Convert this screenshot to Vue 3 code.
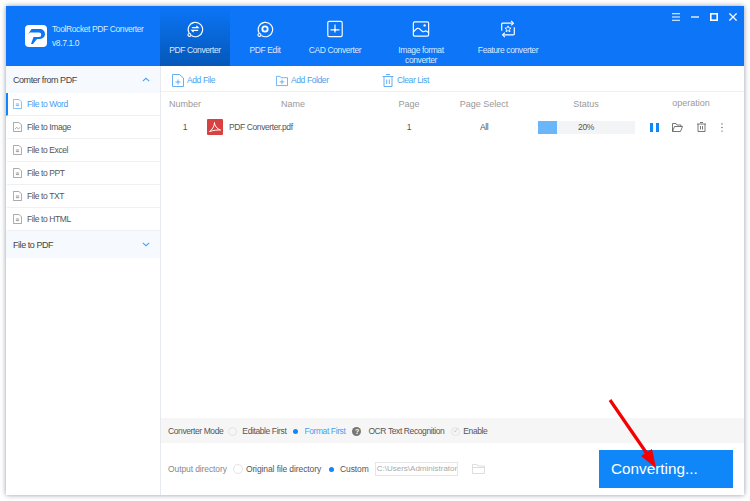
<script setup>
const tabs = [
  { label: 'PDF Converter', w: 70, active: true, icon: 'convert' },
  { label: 'PDF Edit', w: 70, icon: 'edit' },
  { label: 'CAD Converter', w: 70, icon: 'cad' },
  { label: 'Image format converter', w: 102, icon: 'image' },
  { label: 'Feature converter', w: 72, icon: 'feature' },
]
const items = [
  { label: 'File to Word', mark: 'w', active: true },
  { label: 'File to Image', mark: 'img' },
  { label: 'File to Excel', mark: 'e' },
  { label: 'File to PPT', mark: 'p' },
  { label: 'File to TXT', mark: 't' },
  { label: 'File to HTML', mark: 'h' },
]
const heads = ['Number', 'Name', 'Page', 'Page Select', 'Status']
</script>

<template>
  <div class="page">
    <div class="window">
      <header class="header">
        <div class="brand">
          <svg class="logo" viewBox="0 0 22 22">
            <rect width="22" height="22" rx="4" fill="#fff" />
            <path d="M6.500 4h8.500a5 5 0 0 1 0 10h-3l-4 5H6l2.500-7H14a2 2 0 0 0 0-4.500H5L3 9.500z" fill="#0c75f8" />
          </svg>
          <div class="brand-text">
            <div>ToolRocket PDF Converter</div>
            <div>v8.7.1.0</div>
          </div>
        </div>
        <nav class="tabs">
          <div v-for="t in tabs" :key="t.label" class="tab" :class="{ active: t.active }" :style="{ width: t.w + 'px' }">
            <svg class="tab-icon" viewBox="0 0 20 20" fill="none" stroke="#fff" stroke-width="1.300">
              <template v-if="t.icon === 'convert'">
                <path d="M3.500 14.500A8 8 0 1 1 6 17.200" />
                <circle cx="3.800" cy="16.600" r="1.600" />
                <path d="M6.500 8.500h7l-2-2M13.500 11.500h-7l2 2" />
              </template>
              <template v-else-if="t.icon === 'edit'">
                <path d="M3.500 14.500A8 8 0 1 1 6 17.200" />
                <circle cx="3.800" cy="16.600" r="1.600" />
                <circle cx="10" cy="10" r="3" stroke-width="2" />
              </template>
              <template v-else-if="t.icon === 'cad'">
                <rect x="2" y="1.500" width="16" height="17" rx="1.500" />
                <path d="M10 5v9M5 11h10" />
                <circle cx="10" cy="11" r="1.200" fill="#fff" stroke="none" />
              </template>
              <template v-else-if="t.icon === 'image'">
                <rect x="1.500" y="2" width="17" height="16" rx="1.500" />
                <circle cx="14" cy="6" r="1.300" fill="#fff" stroke="none" />
                <path d="M2 13c3-4 5-5 7-2.500s4 3.500 6 1.500l3 1.500" />
              </template>
              <template v-else>
                <path d="M17 8v7.500a1 1 0 0 1-1 1H5M3 12V4.500a1 1 0 0 1 1-1h11" />
                <path d="M13.500 1l2.500 2.500-2.500 2.500M6.500 14l-2.500 2.500 2.500 2.500" />
                <path d="M10 6.500l1 2.300 2.400.2-1.800 1.600.6 2.400-2.200-1.300-2.200 1.300.6-2.400L6.600 9l2.400-.2z" stroke-width="1" />
              </template>
            </svg>
            <span class="tab-label">{{ t.label }}</span>
          </div>
        </nav>
        <div class="controls">
          <svg class="menu" viewBox="0 0 10 10" stroke="#fff" fill="none" stroke-width="1.400"><path d="M0 1h10M0 5h10M0 9h10" /></svg>
          <svg viewBox="0 0 10 10" stroke="#fff" fill="none" stroke-width="1.600"><path d="M0 5h10" /></svg>
          <svg viewBox="0 0 10 10" stroke="#fff" fill="none" stroke-width="2"><rect x="1" y="1" width="8" height="8" /></svg>
          <svg viewBox="0 0 10 10" stroke="#fff" fill="none" stroke-width="1.600"><path d="M.5.500l9 9M9.500.500l-9 9" /></svg>
        </div>
      </header>

      <div class="main">
        <aside class="side">
          <div class="group">
            <span>Comter from PDF</span>
            <svg class="chev" viewBox="0 0 10 6"><path d="M1 5l4-3.500L9 5" /></svg>
          </div>
          <div v-for="i in items" :key="i.label" class="item" :class="{ active: i.active }">
            <svg class="file" viewBox="0 0 10 11" fill="none">
              <path d="M.5.500h6l3 2.500v7.500H.5z" />
              <path v-if="i.mark === 'img'" d="M2 8l2-2 2 1.500L8 6" stroke-width=".7" />
              <path v-else d="M3.200 5.500h3.600M3.200 7.300h3.600" stroke-width=".8" />
            </svg>
            <span>{{ i.label }}</span>
          </div>
          <div class="group last">
            <span>File to PDF</span>
            <svg class="chev" viewBox="0 0 10 6"><path d="M1 1l4 3.500L9 1" /></svg>
          </div>
        </aside>

        <section class="content">
          <div class="toolbar">
            <div class="tool add-file">
              <svg viewBox="0 0 12 13" fill="none"><path d="M.5.500h7l4 3.500v8.500H.5z" /><path d="M3.500 8h5M6 5.500v5" /></svg>
              <span>Add File</span>
            </div>
            <div class="tool add-folder">
              <svg viewBox="0 0 13 12" fill="none"><path d="M.5 1.500h4l1 1.500h7v8.500H.5z" /><path d="M4 7.500h5M6.500 5v5" /></svg>
              <span>Add Folder</span>
            </div>
            <div class="tool">
              <svg viewBox="0 0 11 13" fill="none"><path d="M1.500 3v9.500h8V3M0 2.500h11M3.500.500h4M4.200 5.500v4.500M6.800 5.500v4.500" /></svg>
              <span>Clear List</span>
            </div>
          </div>

          <div class="table-row head">
            <div v-for="h in heads" :key="h">{{ h }}</div>
            <div class="op-head">operation</div>
          </div>

          <div class="table-row body">
            <div>1</div>
            <div class="name">
              <svg class="pdf" viewBox="0 0 16 16">
                <rect width="16" height="16" rx="1" fill="#d94040" />
                <path d="M2.500 12.500C5 11 7.500 7 7.500 3.500c0 3 2.500 6.500 6 7.500-3-.2-7 .2-11 1.500z" fill="none" stroke="#fff" stroke-width="1" />
              </svg>
              <span>PDF Converter.pdf</span>
            </div>
            <div>1</div>
            <div>All</div>
            <div class="progress-cell">
              <div class="progress">
                <div class="fill" :style="{ width: '20%' }"></div>
                <span>20%</span>
              </div>
            </div>
            <div class="ops">
              <svg class="pause" viewBox="0 0 9 9"><rect width="3" height="9" fill="#0f87f8" /><rect x="6" width="3" height="9" fill="#0f87f8" /></svg>
              <svg class="folder" viewBox="0 0 11 9" fill="none"><path d="M.5 8.500V.5h3.500l1 1.500h4v1.500M.5 8.500h8l2-5H2.500z" /></svg>
              <svg class="trash" viewBox="0 0 9 10" fill="none"><path d="M1 2v7.500h7V2M0 2h9M3 .5h3M3.500 4v3.500M5.500 4v3.500" /></svg>
              <svg class="dots" viewBox="0 0 2 10"><circle cx="1" cy="1" r=".8" /><circle cx="1" cy="5" r=".8" /><circle cx="1" cy="9" r=".8" /></svg>
            </div>
          </div>

          <div class="spacer"></div>

          <div class="mode">
            <span>Converter Mode</span>
            <i class="radio off"></i>
            <span>Editable First</span>
            <i class="dot"></i>
            <span class="blue">Format First</span>
            <i class="help">?</i>
            <span>OCR Text Recognition</span>
            <i class="radio off check">✓</i>
            <span>Enable</span>
          </div>

          <div class="output">
            <span class="muted">Output directory</span>
            <i class="radio off big"></i>
            <span>Original file directory</span>
            <i class="dot wide"></i>
            <span>Custom</span>
            <div class="path">C:\Users\Administrator</div>
            <svg class="browse" viewBox="0 0 13 10" fill="none"><path d="M.5.500h4.500l1 1.500h6.500v7.500H.5zM.5 3.500h12" /></svg>
            <button class="convert" type="button">Converting...</button>
          </div>
        </section>
      </div>

      <svg class="arrow" viewBox="0 0 60 80">
        <path d="M2 2L44 63" stroke="#f40000" stroke-width="3.200" fill="none" />
        <path d="M48 70L33 58l11-7z" fill="#f40000" />
      </svg>
    </div>
  </div>
</template>

<style scoped>
.page {
  width: 750px;
  height: 501px;
  padding: 6px;
  box-sizing: border-box;
  background: #fff;
  font-family: "Liberation Sans", Arial, sans-serif;
  font-size: 8.500px;
  letter-spacing: -.4px;
  color: #555;
  overflow: hidden;
}
.window {
  position: relative;
  width: 738px;
  height: 489px;
  display: flex;
  flex-direction: column;
  background: #fff;
  box-shadow: 0 0 5px rgba(60, 70, 90, .55);
}
.header {
  height: 60px;
  flex: none;
  display: flex;
  background: #0c75f8;
  color: #dbeaff;
  position: relative;
}
.brand {
  width: 154px;
  flex: none;
  display: flex;
  align-items: center;
  padding-left: 19px;
  gap: 5px;
  box-sizing: border-box;
}
.logo { width: 22px; height: 22px; flex: none; }
.brand-text { line-height: 14px; white-space: nowrap; }
.tabs { display: flex; }
.tab {
  display: flex;
  flex-direction: column;
  align-items: center;
  padding-top: 14px;
  box-sizing: border-box;
}
.tab.active { background: linear-gradient(#0c75f8, #0458b8); }
.tab-icon { width: 18px; height: 18px; flex: none; }
.tab-label {
  width: 70px;
  margin-top: 7px;
  text-align: center;
  line-height: 10px;
  white-space: normal;
}
.tab:nth-child(1) .tab-label, .tab:nth-child(3) .tab-label, .tab:nth-child(5) .tab-label { white-space: nowrap; width: auto; }
.controls {
  position: absolute;
  top: 7px;
  right: 7px;
  display: flex;
  gap: 11px;
}
.controls svg { width: 8px; height: 8px; display: block; }
.controls .menu { width: 10px; margin-right: -1px; }

.main { flex: 1; display: flex; min-height: 0; }
.side {
  width: 155px;
  flex: none;
  box-sizing: border-box;
  border-right: 1px solid #e6e9ee;
}
.group {
  height: 27px;
  padding: 0 10px 0 7px;
  box-sizing: border-box;
  display: flex;
  align-items: center;
  justify-content: space-between;
  background: #f6fafe;
  color: #444;
  font-size: 9px;
  letter-spacing: -.45px;
}
.group span { position: relative; top: .5px; }
.chev { width: 8px; height: 5px; fill: none; stroke: #4aa3f5; stroke-width: 1.400; }
.item {
  height: 23px;
  box-sizing: border-box;
  padding-left: 5px;
  display: flex;
  align-items: center;
  gap: 5px;
  border-bottom: 1px solid #eef0f3;
  border-left: 2px solid transparent;
}
.item.active { border-left-color: #0f87f8; color: #3f9bf5; }
.file { width: 9px; height: 10px; stroke: #777; stroke-width: .7; flex: none; }
.item.active .file { stroke: #3f9bf5; }

.content { flex: 1; min-width: 0; display: flex; flex-direction: column; }
.toolbar {
  height: 26px;
  flex: none;
  box-sizing: border-box;
  padding: 3px 0 0 11px;
  display: flex;
  align-items: center;
  border-bottom: 1px solid #eef0f3;
  color: #4a9ff0;
}
.tool { display: flex; align-items: center; gap: 3px; }
.tool svg { width: 12px; height: 13px; stroke: #3f9bf5; stroke-width: .8; flex: none; }
.add-file { width: 104px; }
.add-folder { width: 106px; }

.table-row {
  display: grid;
  grid-template-columns: 46px 170px 62px 88px 116px 1fr;
  align-items: center;
  text-align: center;
  margin-left: 1px;
}
.head { height: 24px; color: #999; font-size: 9px; letter-spacing: 0; flex: none; }
.op-head { margin-top: -2px; padding-right: 6px; }
.body { height: 22px; flex: none; }
.name { display: flex; align-items: center; gap: 6px; text-align: left; margin-left: -1px; }
.pdf { width: 16px; height: 16px; flex: none; }
.progress-cell { display: flex; justify-content: center; }
.progress {
  position: relative;
  width: 97px;
  height: 13px;
  background: #f3f4f5;
  line-height: 13px;
  text-align: center;
}
.fill { position: absolute; left: 0; top: 0; bottom: 0; background: #69b6fb; }
.progress span { position: relative; }
.ops { position: relative; display: flex; align-items: center; padding-left: 6px; height: 13px; }
.ops svg { flex: none; display: block; }
.pause { width: 9px; height: 9px; }
.folder { width: 11px; height: 9px; margin-left: 13px; stroke: #555; stroke-width: .8; }
.trash { width: 9px; height: 10px; margin-left: 14px; stroke: #555; stroke-width: .8; }
.dots { width: 2px; height: 9px; margin-left: 15px; fill: #666; }

.spacer { flex: 1; }

.mode {
  height: 25px;
  flex: none;
  box-sizing: border-box;
  padding: 1px 0 0 7px;
  display: flex;
  align-items: center;
  background: #f6f6f6;
  white-space: nowrap;
}
.radio {
  width: 9px;
  height: 9px;
  flex: none;
  box-sizing: border-box;
  border: 1px solid #e4e4e4;
  border-radius: 50%;
  margin: 0 5px;
}
.radio.big { width: 10px; height: 10px; margin: 0 3px 0 6px; }
.dot {
  width: 5px;
  height: 5px;
  flex: none;
  background: #0f87f8;
  border-radius: 50%;
  margin: 0 6px 0 7px;
}
.dot.wide { margin: 0 6px 0 8px; }
.blue { color: #4a9ff0; }
.help {
  width: 9px;
  height: 9px;
  flex: none;
  margin: 0 7px;
  border-radius: 50%;
  background: #777;
  color: #fff;
  font: bold 7px/9px "Liberation Sans", sans-serif;
  text-align: center;
}
.check {
  color: #ccc;
  font: 7px/7px "DejaVu Sans", sans-serif;
  text-align: center;
  margin: 0 3px 0 7px;
}
.output {
  flex: none;
  height: 52px;
  box-sizing: border-box;
  display: flex;
  align-items: center;
  padding-left: 7px;
  font-size: 8.500px;
  letter-spacing: -.1px;
  white-space: nowrap;
}
.muted { color: #888; }
.path {
  width: 83px;
  height: 14px;
  box-sizing: border-box;
  margin-left: 6px;
  border: 1px solid #e6e6e6;
  padding-left: 1px;
  line-height: 12px;
  font-size: 8px;
  letter-spacing: 0;
  color: #aaa;
  overflow: hidden;
}
.browse { width: 13px; height: 10px; margin-left: 14px; stroke: #d5d5d5; stroke-width: .8; flex: none; }
.convert {
  margin-left: auto;
  margin-right: 11px;
  width: 134px;
  height: 38px;
  border: 0;
  padding: 0 0 0 12px;
  background: #0f87f8;
  color: #fff;
  font: 15.300px "Liberation Sans", sans-serif;
  text-align: left;
}
.arrow {
  position: absolute;
  left: 602px;
  top: 392px;
  width: 60px;
  height: 80px;
  overflow: visible;
}
</style>
